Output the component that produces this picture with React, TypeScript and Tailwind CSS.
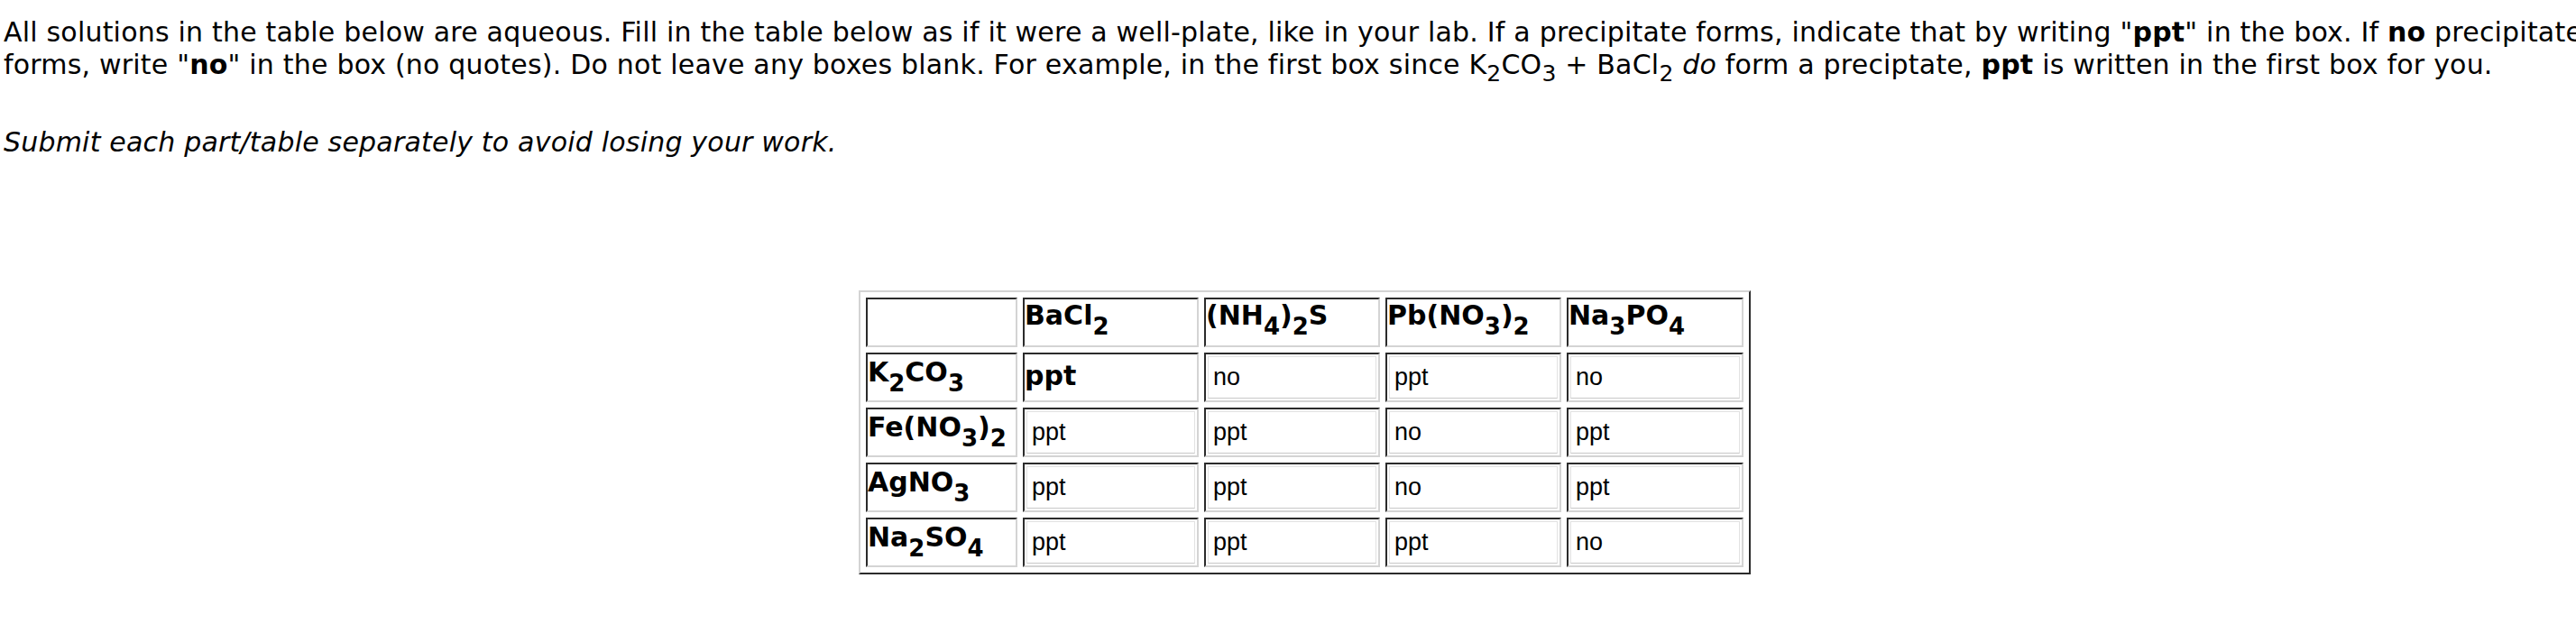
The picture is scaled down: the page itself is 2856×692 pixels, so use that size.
const dark = "border-t-[#2b2b2b] border-l-[#2b2b2b] border-b-[#d4d4d4] border-r-[#d4d4d4]";

const Sub = ({ children, head }: { children: React.ReactNode; head?: boolean }) => (
  <span
    className={
      head
        ? "relative top-[11px] text-[26px] leading-none"
        : "relative top-[8px] text-[25px] leading-none"
    }
  >
    {children}
  </span>
);

const cols: [string, React.ReactNode][] = [
  ["BaCl2", <>BaCl<Sub head>2</Sub></>],
  ["(NH4)2S", <>(NH<Sub head>4</Sub>)<Sub head>2</Sub>S</>],
  ["Pb(NO3)2", <>Pb(NO<Sub head>3</Sub>)<Sub head>2</Sub></>],
  ["Na3PO4", <>Na<Sub head>3</Sub>PO<Sub head>4</Sub></>],
];

const rows: { label: React.ReactNode; values: string[] }[] = [
  { label: <>K<Sub head>2</Sub>CO<Sub head>3</Sub></>, values: ["ppt", "no", "ppt", "no"] },
  { label: <>Fe(NO<Sub head>3</Sub>)<Sub head>2</Sub></>, values: ["ppt", "ppt", "no", "ppt"] },
  { label: <>AgNO<Sub head>3</Sub></>, values: ["ppt", "ppt", "no", "ppt"] },
  { label: <>Na<Sub head>2</Sub>SO<Sub head>4</Sub></>, values: ["ppt", "ppt", "ppt", "no"] },
];

const HeadCell = ({ children, pad = "pt-[2px]" }: { children?: React.ReactNode; pad?: string }) => (
  <div className={`h-[55px] border-2 ${dark} pl-0 ${pad} whitespace-nowrap text-[30px] font-bold leading-[32px]`}>
    {children}
  </div>
);

const InputCell = ({ value }: { value: string }) => (
  <div className={`h-[55px] border-2 ${dark} p-[2px]`}>
    <input
      readOnly
      defaultValue={value}
      className="block h-full w-full border border-[#e2e2e2] border-b-[#c8c8c8] bg-white px-[5px] font-['Liberation_Sans',Arial,sans-serif] text-[27px] text-black outline-none"
    />
  </div>
);

export default function App() {
  return (
    <div className="h-[692px] w-[2856px] overflow-hidden bg-white font-['DejaVu_Sans',Verdana,sans-serif] text-[30px] leading-[36px] tracking-[0.2px] text-black">
      <p className="whitespace-nowrap pl-[4px] pt-[18px]">
        All solutions in the table below are aqueous. Fill in the table below as if it were a well-plate, like in
        your lab. If a precipitate forms, indicate that by writing "<b>ppt</b>" in the box. If <b>no</b> precipitate
        <br />
        forms, write "<b>no</b>" in the box (no quotes). Do not leave any boxes blank. For example, in the first box
        since K<Sub>2</Sub>CO<Sub>3</Sub> + BaCl<Sub>2</Sub> <i>do</i> form a preciptate, <b>ppt</b> is written in
        the first box for you.
      </p>
      <p className="mt-[50px] pl-[4px] italic">Submit each part/table separately to avoid losing your work.</p>

      <div className="ml-[952px] mt-[146px] inline-grid grid-cols-[168px_195px_195px_195px_196px] gap-[6px] border-2 border-t-[#d4d4d4] border-l-[#d4d4d4] border-b-[#2b2b2b] border-r-[#2b2b2b] p-[6px] tracking-normal">
        <HeadCell />
        {cols.map(([key, node]) => (
          <HeadCell key={key}>{node}</HeadCell>
        ))}
        {rows.map((row, i) => (
          <div key={i} className="contents">
            <HeadCell pad="pt-[4px]">{row.label}</HeadCell>
            {row.values.map((v, j) =>
              i === 0 && j === 0 ? (
                <HeadCell key={j} pad="pt-[8px]">
                  ppt
                </HeadCell>
              ) : (
                <InputCell key={j} value={v} />
              )
            )}
          </div>
        ))}
      </div>
    </div>
  );
}
